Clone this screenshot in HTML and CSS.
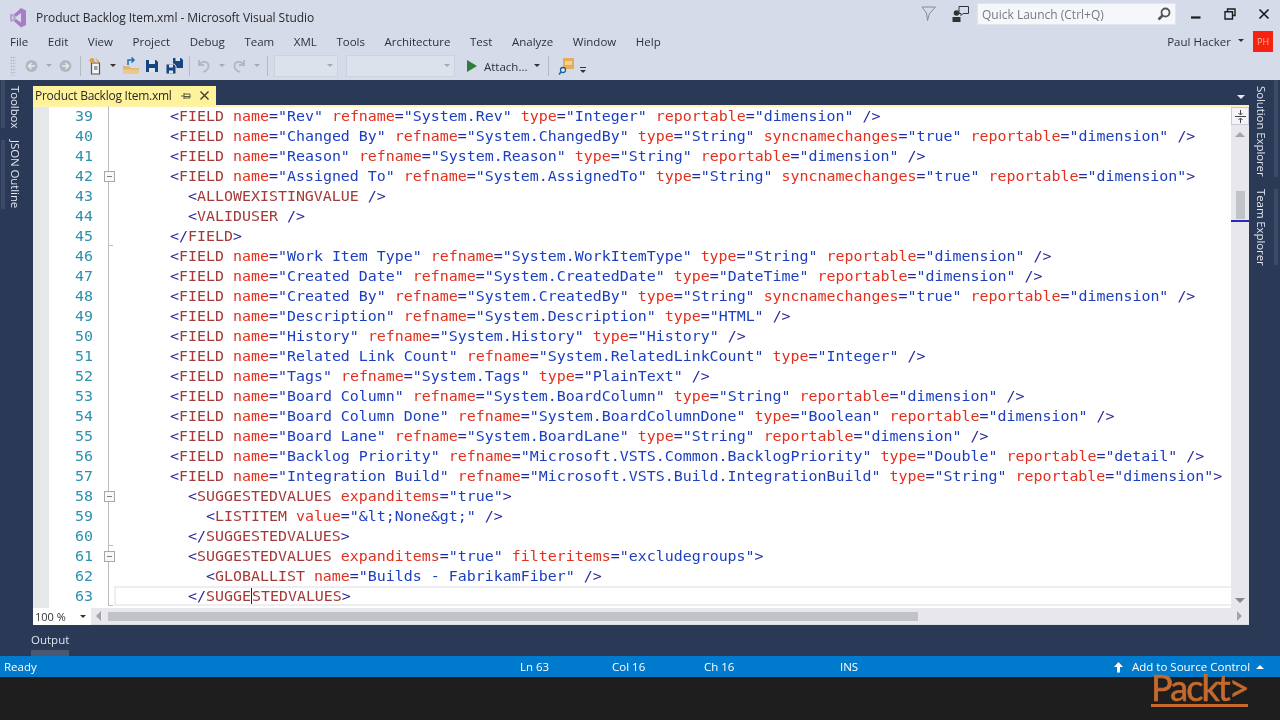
FILE: index.html
```html
<!DOCTYPE html>
<html lang="en">
<head>
<meta charset="utf-8">
<title>Product Backlog Item.xml - Microsoft Visual Studio</title>
<link rel="stylesheet" href="styles.css">
</head>
<body>
<div class="app">
  <header class="chrome">
    <div class="titlerow">
      <svg class="logo" width="16" height="20" viewBox="0 0 16 20"><path d="M11 0 16 2.500V17L11 19.500 3.500 12.800 6 11 11 14.500V5L6 8.700 3.500 6.800Z" fill="#a57fc4"/><path d="M0 6.500 2 5.500 6.500 9.800 2 14 0 13ZM2 8V11.500L4 9.800Z" fill="#b9a0d2" fill-rule="evenodd"/></svg>
      <span class="title">Product Backlog Item.xml - Microsoft Visual Studio</span>
      <svg class="filter" width="18" height="18" viewBox="0 0 18 18"><path d="M3 2H16.500L10.500 8.500 8.500 15.500 7.500 8Z" fill="none" stroke="#868a92"/></svg>
      <svg class="feedback" width="18" height="18" viewBox="0 0 18 18"><path d="M7 1.500H16.500V8.500H11L9 10.500V8.500H7Z" fill="none" stroke="#333"/><circle cx="4.500" cy="8" r="2.800" fill="#333"/><path d="M0.500 17V12H8.500V17Z" fill="#333"/></svg>
      <div class="quick">
        <span class="quick-text">Quick Launch (Ctrl+Q)</span>
        <svg width="14" height="14" viewBox="0 0 14 14"><circle cx="8.500" cy="5.500" r="4" fill="none" stroke="#555" stroke-width="1.800"/><path d="M5.500 8.500 1.500 12.500" stroke="#555" stroke-width="2.500"/></svg>
      </div>
      <div class="winbtns">
        <svg width="12" height="12" viewBox="0 0 12 12"><path d="M1 9.500H10.500" stroke="#1c1c1c" stroke-width="2.200"/></svg>
        <svg width="12" height="12" viewBox="0 0 12 12"><path d="M3.500 3.500V1H11V7.500H8.500M1 3.700H8.500V11H1Z" fill="none" stroke="#1c1c1c" stroke-width="1.400"/></svg>
        <svg width="12" height="12" viewBox="0 0 12 12"><path d="M1.500 1.500 10.500 10.500M10.500 1.500 1.500 10.500" stroke="#1c1c1c" stroke-width="1.700"/></svg>
      </div>
    </div>
    <div class="menurow">
      <nav class="menu">
        <span>File</span><span>Edit</span><span>View</span><span>Project</span><span>Debug</span><span>Team</span><span>XML</span><span>Tools</span><span>Architecture</span><span>Test</span><span>Analyze</span><span>Window</span><span>Help</span>
      </nav>
      <span class="user">Paul Hacker</span>
      <i class="dd dark user-dd"></i>
      <span class="avatar">PH</span>
    </div>
    <div class="toolbar">
      <div class="grip"></div>
      <svg width="17" height="16" viewBox="0 0 17 16"><circle cx="8.500" cy="8" r="6" fill="#b3b7bf"/><path d="M12 8H6M8.500 5 5.500 8 8.500 11" fill="none" stroke="#e8eaf0" stroke-width="1.500"/></svg>
      <div class="ddcell w17"><i class="dd"></i></div>
      <svg width="17" height="16" viewBox="0 0 17 16"><circle cx="8.500" cy="8" r="6" fill="#b3b7bf"/><path d="M5 8H11M8.500 5 11.500 8 8.500 11" fill="none" stroke="#e8eaf0" stroke-width="1.500"/></svg>
      <div class="sepcell w13"></div>
      <svg width="17" height="20" viewBox="0 0 17 20"><path d="M4.500 7H12.500V18H4.500Z" fill="#f4f4f6" stroke="#555" stroke-width="1.200"/><path d="M7 10H10.500V14H7Z" fill="#9a9ea6"/><circle cx="5" cy="4.500" r="2.500" fill="#dca24a"/><path d="M9 2.500 10 4.500 12 5 10 6 9 8" fill="none" stroke="#dca24a"/></svg>
      <div class="ddcell w18"><i class="dd dark"></i></div>
      <svg width="19" height="20" viewBox="0 0 19 20"><path d="M1 10H7L9 12H17V18H1Z" fill="#dcb778"/><path d="M1 13.500H17V18H1Z" fill="#ecc88c"/><path d="M6 9V4H11M9.500 1.500 12 4 9.500 6.500" fill="none" stroke="#1f6fb5" stroke-width="1.500"/></svg>
      <svg width="22" height="16" viewBox="0 0 22 16"><path d="M5 2H15L17 4V14H5Z" fill="#17457f"/><path d="M8 2H14V6H8ZM8 10H14V14H8Z" fill="#dfe3ee"/></svg>
      <svg width="22" height="18" viewBox="0 0 22 18"><path d="M10 1H18L20 3V11H10Z" fill="#17457f"/><path d="M12.500 1H17V4H12.500Z" fill="#dfe3ee"/><path d="M3 7H11L13 9V17H3Z" fill="#17457f" stroke="#d6dbe9"/><path d="M6 7.500H10V10.500H6ZM6 13.500H10V16.500H6Z" fill="#dfe3ee"/></svg>
      <div class="sepcell w9"></div>
      <svg width="19" height="18" viewBox="0 0 19 18"><path d="M5 3V8H10M5.500 7.500C8 3.500 14.500 4 14.500 9 14.500 12 12 14 9 15" fill="none" stroke="#b3b7bf" stroke-width="1.800"/></svg>
      <div class="ddcell w17"><i class="dd"></i></div>
      <svg width="19" height="18" viewBox="0 0 19 18"><path d="M14 3V8H9M13.500 7.500C11 3.500 4.500 4 4.500 9 4.500 12 7 14 10 15" fill="none" stroke="#b3b7bf" stroke-width="1.800"/></svg>
      <div class="ddcell w15"><i class="dd"></i></div>
      <div class="sepcell w6"></div>
      <div class="combo short"><i class="dd"></i></div>
      <div class="combo long"><i class="dd"></i></div>
      <svg class="play" width="12" height="14" viewBox="0 0 12 14"><path d="M1 1 11 7 1 13Z" fill="#2f7d3b"/></svg>
      <span class="attach">Attach...</span>
      <div class="ddcell w17"><i class="dd dark"></i></div>
      <div class="sepcell w6"></div>
      <svg class="find" width="20" height="20" viewBox="0 0 20 20"><path d="M6 2H17V13H6Z" fill="#e6ad58"/><path d="M8 5H15V9H8Z" fill="#f2cf92"/><circle cx="6" cy="14" r="2.500" fill="#eef0f5" stroke="#1f5f9f" stroke-width="1.300"/><path d="M4 16 2 18.500" stroke="#1f5f9f" stroke-width="1.500"/></svg>
      <div class="overflow"></div>
    </div>
  </header>

  <main class="body">
    <aside class="rail left">
      <span class="rail-tab first">Toolbox</span>
      <span class="rail-tab">JSON Outline</span>
    </aside>

    <section class="center">
      <div class="tabwell">
        <div class="tab">
          <span class="tab-name">Product Backlog Item.xml</span>
          <svg class="pin" width="12" height="12" viewBox="0 0 12 12"><path d="M1 6H4M4 3V9M4 4H10V8H4M4 6.500H10" fill="none" stroke="#5b5a3c"/></svg>
          <svg class="tab-close" width="11" height="11" viewBox="0 0 11 11"><path d="M1.500 1.500 9.500 9.500M9.500 1.500 1.500 9.500" stroke="#3f3e2c" stroke-width="1.400"/></svg>
        </div>
        <i class="well-dd"></i>
      </div>

      <div class="editor">
        <div class="editor-main">
          <div class="margin"></div>
          <div class="lines">
<div class="row"><span class="ln">39</span><span class="fold"></span><code class="code">      <b class="d">&lt;</b><b class="e">FIELD</b> <b class="a">name</b><b class="d">=</b><b class="v">"Rev"</b> <b class="a">refname</b><b class="d">=</b><b class="v">"System.Rev"</b> <b class="a">type</b><b class="d">=</b><b class="v">"Integer"</b> <b class="a">reportable</b><b class="d">=</b><b class="v">"dimension"</b> <b class="d">/&gt;</b></code></div>
<div class="row"><span class="ln">40</span><span class="fold"></span><code class="code">      <b class="d">&lt;</b><b class="e">FIELD</b> <b class="a">name</b><b class="d">=</b><b class="v">"Changed By"</b> <b class="a">refname</b><b class="d">=</b><b class="v">"System.ChangedBy"</b> <b class="a">type</b><b class="d">=</b><b class="v">"String"</b> <b class="a">syncnamechanges</b><b class="d">=</b><b class="v">"true"</b> <b class="a">reportable</b><b class="d">=</b><b class="v">"dimension"</b> <b class="d">/&gt;</b></code></div>
<div class="row"><span class="ln">41</span><span class="fold"></span><code class="code">      <b class="d">&lt;</b><b class="e">FIELD</b> <b class="a">name</b><b class="d">=</b><b class="v">"Reason"</b> <b class="a">refname</b><b class="d">=</b><b class="v">"System.Reason"</b> <b class="a">type</b><b class="d">=</b><b class="v">"String"</b> <b class="a">reportable</b><b class="d">=</b><b class="v">"dimension"</b> <b class="d">/&gt;</b></code></div>
<div class="row"><span class="ln">42</span><span class="fold box"></span><code class="code">      <b class="d">&lt;</b><b class="e">FIELD</b> <b class="a">name</b><b class="d">=</b><b class="v">"Assigned To"</b> <b class="a">refname</b><b class="d">=</b><b class="v">"System.AssignedTo"</b> <b class="a">type</b><b class="d">=</b><b class="v">"String"</b> <b class="a">syncnamechanges</b><b class="d">=</b><b class="v">"true"</b> <b class="a">reportable</b><b class="d">=</b><b class="v">"dimension"</b><b class="d">&gt;</b></code></div>
<div class="row"><span class="ln">43</span><span class="fold"></span><code class="code">        <b class="d">&lt;</b><b class="e">ALLOWEXISTINGVALUE</b> <b class="d">/&gt;</b></code></div>
<div class="row"><span class="ln">44</span><span class="fold"></span><code class="code">        <b class="d">&lt;</b><b class="e">VALIDUSER</b> <b class="d">/&gt;</b></code></div>
<div class="row"><span class="ln">45</span><span class="fold tick"></span><code class="code">      <b class="d">&lt;/</b><b class="e">FIELD</b><b class="d">&gt;</b></code></div>
<div class="row"><span class="ln">46</span><span class="fold"></span><code class="code">      <b class="d">&lt;</b><b class="e">FIELD</b> <b class="a">name</b><b class="d">=</b><b class="v">"Work Item Type"</b> <b class="a">refname</b><b class="d">=</b><b class="v">"System.WorkItemType"</b> <b class="a">type</b><b class="d">=</b><b class="v">"String"</b> <b class="a">reportable</b><b class="d">=</b><b class="v">"dimension"</b> <b class="d">/&gt;</b></code></div>
<div class="row"><span class="ln">47</span><span class="fold"></span><code class="code">      <b class="d">&lt;</b><b class="e">FIELD</b> <b class="a">name</b><b class="d">=</b><b class="v">"Created Date"</b> <b class="a">refname</b><b class="d">=</b><b class="v">"System.CreatedDate"</b> <b class="a">type</b><b class="d">=</b><b class="v">"DateTime"</b> <b class="a">reportable</b><b class="d">=</b><b class="v">"dimension"</b> <b class="d">/&gt;</b></code></div>
<div class="row"><span class="ln">48</span><span class="fold"></span><code class="code">      <b class="d">&lt;</b><b class="e">FIELD</b> <b class="a">name</b><b class="d">=</b><b class="v">"Created By"</b> <b class="a">refname</b><b class="d">=</b><b class="v">"System.CreatedBy"</b> <b class="a">type</b><b class="d">=</b><b class="v">"String"</b> <b class="a">syncnamechanges</b><b class="d">=</b><b class="v">"true"</b> <b class="a">reportable</b><b class="d">=</b><b class="v">"dimension"</b> <b class="d">/&gt;</b></code></div>
<div class="row"><span class="ln">49</span><span class="fold"></span><code class="code">      <b class="d">&lt;</b><b class="e">FIELD</b> <b class="a">name</b><b class="d">=</b><b class="v">"Description"</b> <b class="a">refname</b><b class="d">=</b><b class="v">"System.Description"</b> <b class="a">type</b><b class="d">=</b><b class="v">"HTML"</b> <b class="d">/&gt;</b></code></div>
<div class="row"><span class="ln">50</span><span class="fold"></span><code class="code">      <b class="d">&lt;</b><b class="e">FIELD</b> <b class="a">name</b><b class="d">=</b><b class="v">"History"</b> <b class="a">refname</b><b class="d">=</b><b class="v">"System.History"</b> <b class="a">type</b><b class="d">=</b><b class="v">"History"</b> <b class="d">/&gt;</b></code></div>
<div class="row"><span class="ln">51</span><span class="fold"></span><code class="code">      <b class="d">&lt;</b><b class="e">FIELD</b> <b class="a">name</b><b class="d">=</b><b class="v">"Related Link Count"</b> <b class="a">refname</b><b class="d">=</b><b class="v">"System.RelatedLinkCount"</b> <b class="a">type</b><b class="d">=</b><b class="v">"Integer"</b> <b class="d">/&gt;</b></code></div>
<div class="row"><span class="ln">52</span><span class="fold"></span><code class="code">      <b class="d">&lt;</b><b class="e">FIELD</b> <b class="a">name</b><b class="d">=</b><b class="v">"Tags"</b> <b class="a">refname</b><b class="d">=</b><b class="v">"System.Tags"</b> <b class="a">type</b><b class="d">=</b><b class="v">"PlainText"</b> <b class="d">/&gt;</b></code></div>
<div class="row"><span class="ln">53</span><span class="fold"></span><code class="code">      <b class="d">&lt;</b><b class="e">FIELD</b> <b class="a">name</b><b class="d">=</b><b class="v">"Board Column"</b> <b class="a">refname</b><b class="d">=</b><b class="v">"System.BoardColumn"</b> <b class="a">type</b><b class="d">=</b><b class="v">"String"</b> <b class="a">reportable</b><b class="d">=</b><b class="v">"dimension"</b> <b class="d">/&gt;</b></code></div>
<div class="row"><span class="ln">54</span><span class="fold"></span><code class="code">      <b class="d">&lt;</b><b class="e">FIELD</b> <b class="a">name</b><b class="d">=</b><b class="v">"Board Column Done"</b> <b class="a">refname</b><b class="d">=</b><b class="v">"System.BoardColumnDone"</b> <b class="a">type</b><b class="d">=</b><b class="v">"Boolean"</b> <b class="a">reportable</b><b class="d">=</b><b class="v">"dimension"</b> <b class="d">/&gt;</b></code></div>
<div class="row"><span class="ln">55</span><span class="fold"></span><code class="code">      <b class="d">&lt;</b><b class="e">FIELD</b> <b class="a">name</b><b class="d">=</b><b class="v">"Board Lane"</b> <b class="a">refname</b><b class="d">=</b><b class="v">"System.BoardLane"</b> <b class="a">type</b><b class="d">=</b><b class="v">"String"</b> <b class="a">reportable</b><b class="d">=</b><b class="v">"dimension"</b> <b class="d">/&gt;</b></code></div>
<div class="row"><span class="ln">56</span><span class="fold"></span><code class="code">      <b class="d">&lt;</b><b class="e">FIELD</b> <b class="a">name</b><b class="d">=</b><b class="v">"Backlog Priority"</b> <b class="a">refname</b><b class="d">=</b><b class="v">"Microsoft.VSTS.Common.BacklogPriority"</b> <b class="a">type</b><b class="d">=</b><b class="v">"Double"</b> <b class="a">reportable</b><b class="d">=</b><b class="v">"detail"</b> <b class="d">/&gt;</b></code></div>
<div class="row"><span class="ln">57</span><span class="fold"></span><code class="code">      <b class="d">&lt;</b><b class="e">FIELD</b> <b class="a">name</b><b class="d">=</b><b class="v">"Integration Build"</b> <b class="a">refname</b><b class="d">=</b><b class="v">"Microsoft.VSTS.Build.IntegrationBuild"</b> <b class="a">type</b><b class="d">=</b><b class="v">"String"</b> <b class="a">reportable</b><b class="d">=</b><b class="v">"dimension"</b><b class="d">&gt;</b></code></div>
<div class="row"><span class="ln">58</span><span class="fold box"></span><code class="code">        <b class="d">&lt;</b><b class="e">SUGGESTEDVALUES</b> <b class="a">expanditems</b><b class="d">=</b><b class="v">"true"</b><b class="d">&gt;</b></code></div>
<div class="row"><span class="ln">59</span><span class="fold"></span><code class="code">          <b class="d">&lt;</b><b class="e">LISTITEM</b> <b class="a">value</b><b class="d">=</b><b class="v">"&amp;lt;None&amp;gt;"</b> <b class="d">/&gt;</b></code></div>
<div class="row"><span class="ln">60</span><span class="fold tick"></span><code class="code">        <b class="d">&lt;/</b><b class="e">SUGGESTEDVALUES</b><b class="d">&gt;</b></code></div>
<div class="row"><span class="ln">61</span><span class="fold box"></span><code class="code">        <b class="d">&lt;</b><b class="e">SUGGESTEDVALUES</b> <b class="a">expanditems</b><b class="d">=</b><b class="v">"true"</b> <b class="a">filteritems</b><b class="d">=</b><b class="v">"excludegroups"</b><b class="d">&gt;</b></code></div>
<div class="row"><span class="ln">62</span><span class="fold"></span><code class="code">          <b class="d">&lt;</b><b class="e">GLOBALLIST</b> <b class="a">name</b><b class="d">=</b><b class="v">"Builds - FabrikamFiber"</b> <b class="d">/&gt;</b></code></div>
<div class="row current"><span class="ln">63</span><span class="fold tick"></span><code class="code">        <b class="d">&lt;/</b><b class="e">SUGGE<i class="caret"></i>STEDVALUES</b><b class="d">&gt;</b></code></div>
          </div>
          <div class="vscroll">
            <div class="split"><svg width="11" height="13" viewBox="0 0 11 13"><path d="M0 6.500H11M5.500 0V4.500M3.500 3 5.500 5 7.500 3M5.500 13V8.500M3.500 10 5.500 8 7.500 10" fill="none" stroke="#444"/></svg></div>
            <i class="tri up"></i>
            <div class="vtrack">
              <div class="vthumb"></div>
              <div class="vmark"></div>
            </div>
            <i class="tri down"></i>
          </div>
        </div>
        <div class="hbar">
          <div class="zoom"><span>100 %</span><i class="dd dark"></i></div>
          <i class="tri left-arrow"></i>
          <div class="hthumb"></div>
          <i class="tri right-arrow"></i>
        </div>
      </div>

      <div class="outputwell">
        <span class="output-label">Output</span>
        <div class="output-tab"></div>
      </div>
    </section>

    <aside class="rail right">
      <span class="rail-tab first">Solution Explorer</span>
      <span class="rail-tab">Team Explorer</span>
    </aside>
  </main>

  <footer class="status">
    <span class="ready">Ready</span>
    <span class="cell">Ln 63</span>
    <span class="cell">Col 16</span>
    <span class="cell ch">Ch 16</span>
    <span class="cell">INS</span>
    <svg class="up-arrow" width="11" height="12" viewBox="0 0 11 12"><path d="M5.500 1 10 6H7V11.500H4V6H1Z" fill="#fff"/></svg>
    <span class="source">Add to Source Control</span>
    <i class="source-caret"></i>
  </footer>
  <div class="letterbox"></div>
  <div class="packt"><span>Packt&gt;</span></div>
</div>
</body>
</html>
```
FILE: styles.css
```css
* { box-sizing: border-box; }
html, body { margin: 0; padding: 0; background: #1f1e1e; }
b { font-weight: normal; }
i { font-style: normal; display: block; }
svg { display: block; flex: none; }

.app {
  position: relative;
  width: 1280px;
  height: 720px;
  overflow: hidden;
  display: flex;
  flex-direction: column;
  font-family: "Open Sans", "Noto Sans", sans-serif;
  font-size: 12px;
  color: #1e1e1e;
  filter: blur(0.4px);
}

/* Chrome */
.chrome { height: 80px; background: #d6dbe9; display: flex; flex-direction: column; }
.titlerow { height: 33px; display: flex; align-items: center; padding-left: 10px; }
.logo { margin-top: 2px; }
.title { margin: 1px auto 0 10px; font-size: 12px; letter-spacing: -0.05px; color: #2a2a2a; }
.filter { margin-right: 15px; margin-top: -6px; }
.feedback { margin-right: 7px; margin-top: -6px; }
.quick {
  width: 199px; height: 22px; margin-top: -5px;
  background: #f6f7fb; border: 1px solid #e2e5ee;
  display: flex; align-items: center; justify-content: space-between;
  padding: 0 4px 0 4px;
}
.quick-text { font-size: 12px; color: #757a85; }
.winbtns { width: 104px; padding: 0 10px 0 14px; display: flex; justify-content: space-between; margin-top: -6px; }

.menurow { height: 19px; display: flex; align-items: center; padding-left: 10px; margin-top: -1px; }
.menu { display: flex; gap: 19.600px; font-size: 11.500px; margin-right: auto; color: #2e3138; }
.user { font-size: 11.500px; color: #2e3138; }
.user-dd { margin: -3px 0 0 7px; }
.avatar {
  width: 20px; height: 21px; margin: -1px 7px 0 9px;
  background: #f5230f; color: #f7b7a0; font-size: 9px; text-align: center; line-height: 21px;
}

.toolbar { height: 29px; display: flex; align-items: center; padding-left: 10px; }
.grip {
  width: 13px; height: 20px;
  background-image: radial-gradient(#a6aab4 0.6px, transparent 0.9px);
  background-size: 2.500px 3px;
  clip-path: inset(0 7px 0 0);
}
.dd { width: 0; height: 0; border: 3px solid transparent; border-top: 3px solid #a5a9b2; border-bottom: 0; }
.dd.dark { border-top-color: #333; }
.ddcell, .sepcell { height: 20px; display: flex; align-items: center; justify-content: center; flex: none; }
.w6 { width: 6px; } .w9 { width: 9px; } .w13 { width: 13px; } .w15 { width: 15px; } .w17 { width: 17px; } .w18 { width: 18px; }
.sepcell::before { content: ""; width: 1px; height: 20px; background: #b4b9c6; }
.combo {
  height: 22px; margin-left: 8px; background: #dde1ec; border: 1px solid #cdd2df;
  display: flex; align-items: center; justify-content: flex-end; padding-right: 4px;
}
.combo.short { width: 64px; margin-left: 4px; }
.combo.long { width: 109px; }
.play { margin-left: 11px; }
.attach { margin: 1px 0 0 6px; width: 44px; font-size: 11.500px; color: #2e3138; white-space: nowrap; }
.find { margin-left: 6px; }
.overflow { width: 6px; height: 6px; margin: 9px 0 0 3px; border-top: 1px solid #333; border-bottom: 3px solid transparent; position: relative; }
.overflow::after { content: ""; display: block; margin-top: 2px; border: 3px solid transparent; border-top: 3px solid #333; border-bottom: 0; }

/* Body */
.body { height: 576px; display: flex; background: #2a3a56; }
.rail {
  flex: none; display: flex; flex-direction: row;
  padding-top: 6px; gap: 12px;
  color: #e3e6ee; font-size: 11.500px;
  writing-mode: vertical-rl;
}
.rail.left { width: 33px; align-items: flex-end; }
.rail.right { width: 31px; align-items: flex-start; }
.rail-tab { white-space: nowrap; line-height: 14px; letter-spacing: -0.1px; }
.rail-tab.first { margin-top: -6px; padding-top: 6px; }
.rail.left .rail-tab { width: 22px; background: linear-gradient(#3c4a67, #3c4a67) 1px 0 / 4px 100% no-repeat; }
.rail.right .rail-tab { width: 31px; padding-right: 12px; background: linear-gradient(#3c4a67, #3c4a67) 25px 0 / 4px 100% no-repeat; }

.center { flex: 1; min-width: 0; display: flex; flex-direction: column; }
.tabwell { height: 27px; padding-top: 6px; display: flex; justify-content: space-between; border-bottom: 2px solid #fff2b0; }
.tab {
  width: 183px; height: 19px; padding: 0 6px 0 2px; background: #fff29d; color: #2a2a20;
  display: flex; align-items: center;
}
.tab-name { font-size: 12px; letter-spacing: -0.250px; white-space: nowrap; }
.pin { margin-left: 8px; }
.tab-close { margin-left: 7px; }
.well-dd { margin: 9px 4px 0 0; width: 0; height: 0; border: 4px solid transparent; border-top: 4px solid #e8eaf0; border-bottom: 0; }

.editor { height: 518px; background: #fff; display: flex; flex-direction: column; }
.editor-main { flex: 1; min-height: 0; display: flex; }
.margin { width: 16px; background: #e6e7e8; flex: none; }
.lines { flex: 1; min-width: 0; margin-top: -1px; overflow: hidden; }
.row { height: 20px; display: flex; line-height: 20px; font-family: "DejaVu Sans Mono", "Liberation Mono", monospace; font-size: 14.950px; }
.ln { width: 44px; flex: none; text-align: right; color: #2b91af; }
.fold {
  width: 23px; flex: none; position: relative;
  background: linear-gradient(#bdbdbd, #bdbdbd) 15px 0 / 1px 100% no-repeat;
}
.fold.box::before {
  content: ""; position: absolute; left: 11px; top: 5px; width: 9px; height: 9px;
  background: linear-gradient(#808080, #808080) center / 5px 1px no-repeat #f8f8f8; border: 1px solid #a8a8a8;
}
.fold.tick::after { content: ""; position: absolute; left: 15px; bottom: 0; width: 5px; height: 1px; background: #bdbdbd; }
.code { white-space: pre; font-family: inherit; font-size: inherit; flex: 1; min-width: 0; overflow: hidden; }
.current .code { border: 2px solid #eeeef2; border-width: 2px 0 2px 2px; margin-left: -2px; line-height: 16px; }
.d { color: #27279c; }
.e { color: #a33a3a; }
.a { color: #e2301f; }
.v { color: #1c3fbf; }
.caret { display: inline-block; width: 0; height: 18px; margin: -3px 0; vertical-align: middle; border-left: 1px solid #222; }

.vscroll { width: 18px; flex: none; background: #e8e8ec; display: flex; flex-direction: column; align-items: center; }
.split { width: 18px; height: 18px; background: #f4f4f8; border: 1px solid #c8cbe0; display: flex; align-items: center; justify-content: center; }
.tri { width: 0; height: 0; border: 5px solid transparent; flex: none; }
.tri.up { border-top: 0; border-bottom: 5px solid #a4a4a8; margin-top: 7px; }
.tri.down { border-bottom: 0; border-top: 5px solid #87878c; margin-bottom: 5px; }
.vtrack { flex: 1; width: 18px; position: relative; display: flex; flex-direction: column; align-items: center; padding-top: 54px; }
.vthumb { width: 9px; height: 28px; background: #c2c3c9; }
.vmark { width: 18px; height: 2px; background: #2a2ab8; margin-top: 1px; }

.hbar { height: 17px; flex: none; background: #e8e8ec; display: flex; align-items: center; border-bottom: 1px solid #dcdce6; }
.zoom { width: 58px; height: 17px; background: #fff; display: flex; align-items: center; justify-content: space-between; padding: 0 5px 0 2px; font-size: 11px; color: #333; flex: none; }
.tri.left-arrow { border-left: 0; border-right: 5px solid #a4a4a8; margin-left: 5px; }
.hthumb { width: 810px; height: 9px; background: #c2c3c9; margin-left: 7px; flex: none; }
.tri.right-arrow { border-right: 0; border-left: 5px solid #a4a4a8; margin-left: auto; margin-right: 7px; }

.outputwell { flex: 1; display: flex; flex-direction: column; color: #dfe3ec; font-size: 11.500px; margin-left: -2px; }
.output-label { margin-top: 7px; height: 18px; line-height: 16px; }
.output-tab { width: 38px; height: 6px; background: #4a5873; }

/* Status */
.status { height: 21px; background: #007acc; color: #fff; display: flex; align-items: center; font-size: 11.500px; padding-left: 4px; flex: none; }
.ready { width: 516px; flex: none; }
.cell { width: 92px; flex: none; }
.cell.ch { width: 136px; }
.up-arrow { margin-left: 181px; }
.source { margin-left: 8px; white-space: nowrap; }
.source-caret { margin-left: 6px; width: 0; height: 0; border: 4px solid transparent; border-bottom: 4px solid #fff; border-top: 0; }

.letterbox { flex: 1; background: #1f1e1e; }
.packt {
  position: absolute; left: 1151px; top: 671px; width: 97px; height: 36px;
  border-bottom: 3px solid #c56a2e;
  color: #c56a2e; font-family: "Lato", sans-serif; font-size: 36px; line-height: 33px; letter-spacing: -1.900px; white-space: nowrap;
  -webkit-text-stroke: 0.6px #c56a2e;
}
```
